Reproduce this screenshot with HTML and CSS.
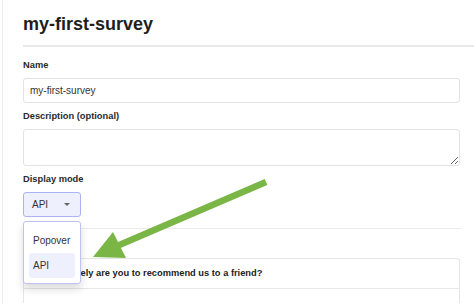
FILE: index.html
```html
<!DOCTYPE html>
<html lang="en">
<head>
<meta charset="utf-8">
<title>my-first-survey</title>
<link rel="stylesheet" href="styles.css">
</head>
<body>
<div class="page">
  <header class="head">
    <h1 class="title">my-first-survey</h1>
  </header>
  <form class="form">
    <div class="field">
      <label class="label">Name</label>
      <input class="input" type="text" value="my-first-survey">
    </div>
    <div class="field">
      <label class="label">Description (optional)</label>
      <textarea class="textarea"></textarea>
    </div>
    <div class="field display">
      <label class="label">Display mode</label>
      <div class="select-wrap">
        <div class="select"><span>API</span><span class="caret"></span></div>
        <ul class="menu">
          <li class="item">Popover</li>
          <li class="item active">API</li>
        </ul>
      </div>
    </div>
    <div class="section">
      <div class="card">
        <div class="card-head">How likely are you to recommend us to a friend?</div>
        <div class="card-body"></div>
      </div>
    </div>
  </form>
</div>
<svg class="arrow" width="474" height="304" viewBox="0 0 474 304">
  <line x1="266" y1="182" x2="117" y2="246" stroke="#79b646" stroke-width="6.5"/>
  <polygon points="93,257 113,232 126,258" fill="#79b646"/>
</svg>
</body>
</html>
```

FILE: styles.css
```css
html, body {
  margin: 0;
  padding: 0;
}
body {
  font-family: "Liberation Sans", Arial, sans-serif;
  color: #222;
  background: #fff;
  overflow: hidden;
  width: 474px;
  height: 304px;
}
.page {
  margin-left: 2px;
  border-left: 1px solid #ececec;
  padding-left: 20px;
  height: 304px;
  box-sizing: border-box;
  overflow: hidden;
}
.head {
  border-bottom: 2px solid #e9e9e9;
  padding-bottom: 10px;
}
.title {
  margin: 0;
  padding-top: 13px;
  font-size: 18px;
  line-height: 22px;
  font-weight: 700;
  color: #1e1e1e;
}
.form {
  width: 437px;
  padding-top: 12px;
}
.field {
  margin-bottom: 7px;
}
.field.display {
  margin-bottom: 11px;
}
.label {
  display: block;
  font-size: 9.3px;
  line-height: 12px;
  font-weight: 700;
  color: #2a2a2a;
  margin-bottom: 7px;
}
.input,
.textarea {
  display: block;
  box-sizing: border-box;
  width: 100%;
  margin: 0;
  border: 1px solid #e3e3e3;
  border-radius: 3px;
  font-family: "Liberation Sans", Arial, sans-serif;
  font-size: 10px;
  color: #333;
  background: #fff;
  outline: none;
}
.input {
  height: 25px;
  padding: 0 6px;
}
.textarea {
  height: 37px;
  padding: 4px 6px;
  resize: vertical;
}
.select-wrap {
  position: relative;
  width: 58px;
}
.select {
  box-sizing: border-box;
  height: 25px;
  width: 58px;
  display: flex;
  align-items: center;
  justify-content: space-between;
  padding: 0 10px 0 8px;
  border: 1px solid #aab2f2;
  border-radius: 3px;
  background: #eef0fd;
  font-size: 10px;
  color: #333;
}
.caret {
  width: 0;
  height: 0;
  border-left: 3px solid transparent;
  border-right: 3px solid transparent;
  border-top: 3px solid #666;
}
.menu {
  position: absolute;
  top: 29px;
  left: 0;
  z-index: 2;
  box-sizing: border-box;
  width: 58px;
  height: 63px;
  margin: 0;
  padding: 6px 5px 5px;
  list-style: none;
  background: #fff;
  border: 1px solid #bcc2f4;
  border-radius: 3px;
  box-shadow: 0 5px 8px rgba(0, 0, 0, 0.14);
}
.item {
  height: 25px;
  line-height: 25px;
  padding-left: 4px;
  font-size: 10px;
  color: #333;
  border-radius: 3px;
}
.item.active {
  background: #eef0fd;
}
.section {
  width: 439px;
  border-top: 1px solid #ececec;
  padding-top: 29px;
}
.card {
  width: 437px;
  box-sizing: border-box;
  border: 1px solid #e6e6e6;
  border-bottom: none;
  border-radius: 3px 3px 0 0;
}
.card-head {
  height: 29px;
  line-height: 29px;
  padding-left: 24px;
  border-bottom: 1px solid #e6e6e6;
  font-size: 9.3px;
  font-weight: 700;
  color: #222;
}
.card-body {
  height: 14px;
}
.arrow {
  position: absolute;
  left: 0;
  top: 0;
  z-index: 3;
  pointer-events: none;
}
```
